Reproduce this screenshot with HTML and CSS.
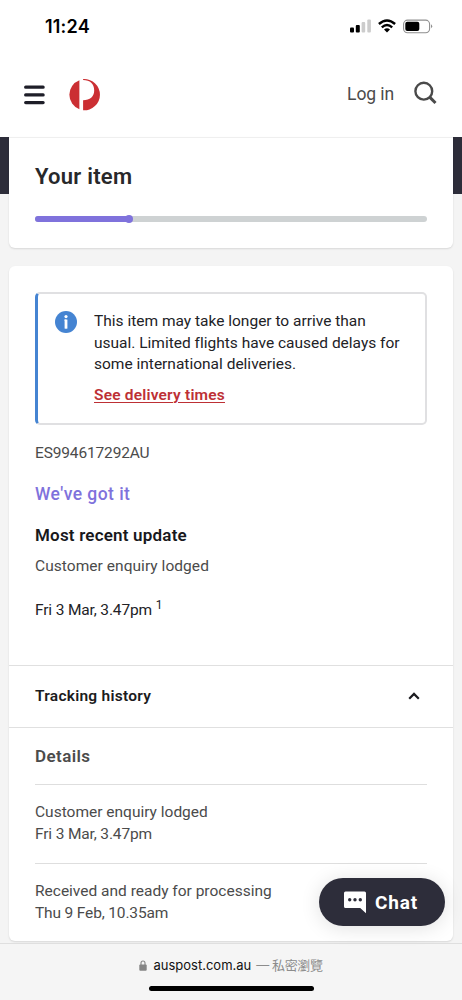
FILE: index.html
```html
<!DOCTYPE html>
<html lang="en">
<head>
    <meta charset="UTF-8">
    <meta name="viewport" content="width=device-width, initial-scale=1.0">
    <title>Track your item</title>
    <link rel="stylesheet" href="styles.css">
</head>
<body>
    <div class="status-bar">
        <span class="clock">11:24</span>
        <div class="status-icons">
            <svg width="21" height="14" viewBox="0 0 21 14">
                <rect x="0" y="8.5" width="4" height="5" rx="1"/>
                <rect x="5.8" y="6" width="4" height="7.5" rx="1"/>
                <g fill="#ccc">
                    <rect x="11.6" y="3" width="3.6" height="10.5" rx="1"/>
                    <rect x="17.3" y="0.5" width="3.6" height="13" rx="1"/>
                </g>
            </svg>
            <svg width="18" height="14" viewBox="0 0 18 14">
                <path d="M0.9 5Q9-2.2 17.1 5M3.8 8.4Q9 3.8 14.2 8.4" fill="none" stroke="#000" stroke-width="2.4"/>
                <path d="M6 10.5Q9 8.2 12 10.5L9 13.5z"/>
            </svg>
            <svg width="30" height="15" viewBox="0 0 30 15">
                <rect x="0.6" y="1.1" width="26" height="12.6" rx="4" fill="none" stroke="#8f8f8f" stroke-width="1.1"/>
                <rect x="2.3" y="2.8" width="14" height="9.2" rx="2"/>
                <path d="M28 5.3q2.4 2 0 4z" fill="#8f8f8f"/>
            </svg>
        </div>
    </div>

    <header class="header">
        <svg class="menu" width="21" height="20" viewBox="0 0 21 20">
            <path d="M1.7 2.2h17.4M1.7 9.9h17.4M1.7 17.6h17.4" stroke="#1e1e28" stroke-width="3.3" stroke-linecap="round"/>
        </svg>
        <svg class="logo" width="32" height="32" viewBox="0 0 32 32" fill="#cb2f33">
            <path d="M10.4 1.2A15.5 15.5 0 0 0 10.4 30.2z"/>
            <path d="M14.1 0.1A15.6 15.6 0 1 1 14.1 31.2V21.3C21 21.3 25.2 17.5 25.2 11.5C25.2 5 21 1.1 14.1 1.1z"/>
        </svg>
        <a class="login">Log in</a>
        <svg class="search" width="23" height="24" viewBox="0 0 23 24" fill="none" stroke="#4a4a4a">
            <circle cx="9.8" cy="10.2" r="8.4" stroke-width="2.4"/>
            <path d="M15.7 16.1L21.5 22" stroke-width="3"/>
        </svg>
    </header>

    <main class="content">
        <section class="card item-card">
            <h1>Your item</h1>
            <div class="progress">
                <div class="progress-fill" style="width: 24.5%"></div>
            </div>
        </section>

        <section class="card details-card">
            <div class="summary">
                <div class="alert">
                    <svg class="info" width="22" height="22" viewBox="0 0 22 22">
                        <circle cx="11" cy="11" r="11" fill="#4584d2"/>
                        <circle cx="11" cy="5.6" r="1.6" fill="#fff"/>
                        <path d="M11 8.6v9M9.4 9.1h1.6" stroke="#fff" stroke-width="1"/>
                        <path d="M11 8.6v9" stroke="#fff" stroke-width="2.8"/>
                    </svg>
                    <div class="alert-text">
                        <p>This item may take longer to arrive than<br>usual. Limited flights have caused delays for<br>some international deliveries.</p>
                        <a class="alert-link">See delivery times</a>
                    </div>
                </div>
                <p class="tracking-id">ES994617292AU</p>
                <p class="status">We've got it</p>
                <h2>Most recent update</h2>
                <p class="update">Customer enquiry lodged</p>
                <p class="update-time">Fri 3 Mar, 3.47pm <sup>1</sup></p>
            </div>

            <div class="history-toggle">
                <h3>Tracking history</h3>
                <svg width="12" height="8" viewBox="0 0 12 8">
                    <path d="M1.2 6.7L6 1.9l4.8 4.8" fill="none" stroke="#1b1b20" stroke-width="2.2"/>
                </svg>
            </div>

            <div class="history">
                <h4>Details</h4>
                <div class="event">
                    <p>Customer enquiry lodged</p>
                    <p class="event-time">Fri 3 Mar, 3.47pm</p>
                </div>
                <div class="event">
                    <p>Received and ready for processing</p>
                    <p class="event-time">Thu 9 Feb, 10.35am</p>
                </div>
            </div>
        </section>
    </main>

    <button class="chat">
        <svg width="22" height="23" viewBox="0 0 22 23">
            <path d="M1.5 0.5h19q1.5 0 1.5 1.5v20.3L16.2 17H1.5Q0 17 0 15.5V2Q0 .5 1.5.5z" fill="#fff"/>
            <g fill="#2d2d3a">
                <circle cx="5.7" cy="8.8" r="1.7"/>
                <circle cx="11" cy="8.8" r="1.7"/>
                <circle cx="16.3" cy="8.8" r="1.7"/>
            </g>
        </svg>
        <span>Chat</span>
    </button>

    <footer class="browser-bar">
        <div class="address">
            <svg width="8" height="11" viewBox="0 0 8 11">
                <rect x="0.3" y="4.5" width="7.4" height="6.2" rx="1" fill="#858585"/>
                <path d="M2 5V3a2 2 0 0 1 4 0v2" fill="none" stroke="#858585" stroke-width="1.1"/>
            </svg>
            <span class="domain">auspost.com.au</span>
            <span class="private">— 私密瀏覽</span>
        </div>
        <div class="home-indicator"></div>
    </footer>
</body>
</html>
```
FILE: styles.css
```css
* {
    box-sizing: border-box;
}

body {
    font-family: Roboto, "Liberation Sans", sans-serif;
    font-size: 15.5px;
    line-height: 22px;
    font-variant-ligatures: none;
    margin: 0;
    height: 1000px;
    overflow: hidden;
    display: flex;
    flex-direction: column;
    color: #4b4b4b;
    background-color: #f4f4f4;
}

h1, h2, h3, h4, p {
    margin: 0;
}

svg {
    display: block;
    flex: none;
}

.status-bar {
    height: 52px;
    padding: 0 29px 0 45px;
    display: flex;
    align-items: center;
    justify-content: space-between;
    background-color: #fff;
}

.clock {
    padding-top: 2px;
    font-family: Inter, sans-serif;
    font-size: 18px;
    font-weight: 600;
    letter-spacing: 0.2px;
    color: #000;
}

.status-icons {
    display: flex;
    align-items: center;
    gap: 7px;
}

.header {
    height: 85px;
    padding: 0 25px 0 24px;
    display: flex;
    align-items: center;
    background-color: #fff;
}

.logo {
    margin-left: 24px;
}

.login {
    margin-left: auto;
    padding-bottom: 2px;
    font-size: 17.5px;
    letter-spacing: -0.1px;
}

.search {
    margin: -3px 0 0 20px;
}

.content {
    height: 806px;
    padding: 0 9px;
    background: linear-gradient(#2d2d3a 57px, #f4f4f4 57px);
}

.card {
    background-color: #fff;
    border-radius: 6px;
    box-shadow: 0 1px 2px rgba(0,0,0,0.12);
}

.item-card {
    height: 111px;
    padding: 25px 26px 0;
    border-top: 1px solid #efefef;
    border-radius: 0 0 6px 6px;
}

h1 {
    font-size: 22px;
    font-weight: 600;
    line-height: 28px;
    letter-spacing: 0.25px;
    color: #28282a;
}

.progress {
    height: 6px;
    margin-top: 25px;
    border-radius: 3px;
    background-color: #ced2d3;
}

.progress-fill {
    position: relative;
    height: 6px;
    border-radius: 3px;
    background-color: #7f72dc;
}

.progress-fill::after {
    content: "";
    position: absolute;
    right: -2px;
    top: -1px;
    width: 8px;
    height: 8px;
    border-radius: 50%;
    background-color: #7f72dc;
}

.details-card {
    height: 675px;
    margin-top: 18px;
}

.summary {
    height: 400px;
    padding: 26px 26px 0;
    border-bottom: 1px solid #e0e0e0;
}

.alert {
    height: 133px;
    display: flex;
    gap: 17px;
    padding: 17px 0 0 17px;
    border: 2px solid #e0e0e2;
    border-left: 3px solid #4584d2;
    border-radius: 5px;
    color: #222226;
}

.alert-text p {
    line-height: 21.6px;
}

.alert-link {
    display: block;
    margin-top: 8px;
    font-weight: 600;
    letter-spacing: 0.2px;
    color: #bd3035;
    text-decoration: underline;
    text-decoration-thickness: 1px;
    text-underline-offset: 2px;
}

.tracking-id {
    margin-top: 17px;
    letter-spacing: -0.15px;
}

.status {
    margin-top: 19px;
    font-size: 17.5px;
    font-weight: 500;
    letter-spacing: 0.45px;
    color: #7f72dc;
}

h2 {
    margin-top: 19px;
    font-size: 17px;
    line-height: 22px;
    font-weight: 600;
    letter-spacing: 0.2px;
    color: #18181c;
}

.update {
    margin-top: 9px;
    letter-spacing: 0.05px;
}

.update-time {
    margin-top: 22px;
    letter-spacing: -0.15px;
    color: #222226;
}

.update-time sup {
    font-size: 12px;
    line-height: 0;
}

.history-toggle {
    height: 62px;
    padding: 0 33px 2px 26px;
    display: flex;
    align-items: center;
    justify-content: space-between;
    border-bottom: 1px solid #e0e0e0;
}

h3 {
    font-size: 15.5px;
    font-weight: 600;
    letter-spacing: 0.25px;
    color: #1b1b20;
}

.history {
    padding: 17px 26px 0;
}

h4 {
    font-size: 17px;
    font-weight: 600;
    letter-spacing: 0.4px;
    margin-bottom: 17px;
}

.event {
    height: 79px;
    padding-top: 16px;
    border-top: 1px solid #dedede;
}

.event-time {
    letter-spacing: -0.15px;
}

.chat {
    position: absolute;
    left: 319px;
    top: 878px;
    width: 126px;
    height: 48px;
    padding: 0 0 0 25px;
    display: flex;
    align-items: center;
    gap: 9px;
    border: none;
    border-radius: 24px;
    font-family: inherit;
    font-size: 19px;
    font-weight: 700;
    letter-spacing: 0.8px;
    color: #fff;
    background-color: #2d2d3a;
    box-shadow: 0 2px 20px rgba(0,0,0,0.12);
}

.browser-bar {
    height: 57px;
    border-top: 1px solid #dfdfdf;
    background-color: #f5f5f5;
}

.address {
    height: 42px;
    display: flex;
    align-items: center;
    justify-content: center;
    gap: 5px;
    font-family: Inter, "Noto Sans CJK TC", sans-serif;
    font-size: 13px;
}

.address svg {
    margin-right: 1px;
}

.domain {
    color: #111;
}

.private {
    letter-spacing: -0.4px;
    color: #8c8c8c;
}

.home-indicator {
    width: 165px;
    height: 5px;
    margin: 0 auto;
    border-radius: 3px;
    background-color: #000;
}
```
